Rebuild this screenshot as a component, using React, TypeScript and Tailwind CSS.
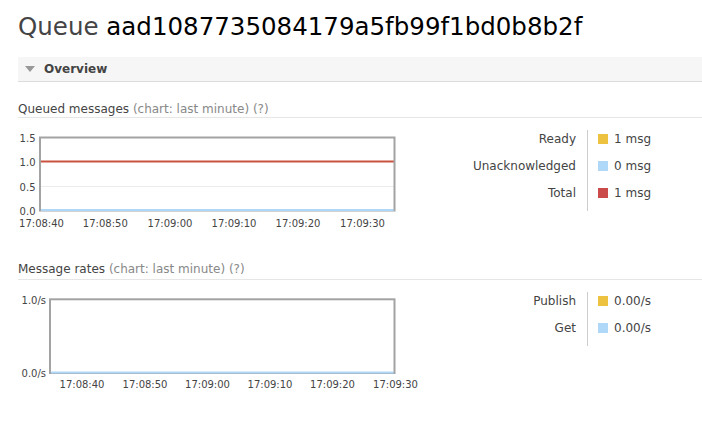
import React from "react";

const FONT = { fontFamily: '"DejaVu Sans", Verdana, sans-serif' };

function Legend({ rows }: { rows: { label: string; color: string; value: string }[] }) {
  return (
    <div className="mt-[12px] flex flex-col">
      {rows.map((r) => (
        <div key={r.label} className="flex h-[27px] text-[12px] leading-[18px] text-[#444]">
          <div className="w-[160px] border-r border-[#ccc] pr-[11px] text-right">{r.label}</div>
          <div className="flex items-start pl-[10px]">
            <span className="mt-[4px] mr-[6px] inline-block h-[10px] w-[10px]" style={{ backgroundColor: r.color }} />
            <span>{r.value}</span>
          </div>
        </div>
      ))}
    </div>
  );
}

function SectionHeader({ title, pb }: { title: string; pb: string }) {
  return (
    <div className={`border-b border-[#e6e6e6] text-[12px] leading-[15px] text-[#444] ${pb}`}>
      {title} <span className="text-[#888]">(chart: last minute) (?)</span>
    </div>
  );
}

const tick = { fontSize: 10, fill: "#444", fontFamily: '"DejaVu Sans", Verdana, sans-serif' };

function Chart1() {
  const xs = [23.5, 87.3, 152, 216, 280, 344.5];
  const labels = ["17:08:40", "17:08:50", "17:09:00", "17:09:10", "17:09:20", "17:09:30"];
  return (
    <svg width={410} height={116} className="block">
      <rect x={22} y={19.5} width={354.5} height={73} fill="#fff" />
      <line x1={22} x2={376.5} y1={68.5} y2={68.5} stroke="#ececec" strokeWidth={1} />
      <line x1={22} x2={376.5} y1={43.5} y2={43.5} stroke="#c9533f" strokeWidth={2} />
      <rect x={22} y={19.5} width={354.5} height={73} fill="none" stroke="#a3a3a3" strokeWidth={2} />
      <line x1={23} x2={375.5} y1={92} y2={92} stroke="#afd8f8" strokeWidth={2} />
      {[
        ["1.5", 23.6],
        ["1.0", 47.6],
        ["0.5", 72.6],
        ["0.0", 96.6],
      ].map(([t, y]) => (
        <text key={t as string} x={17.5} y={y as number} textAnchor="end" style={tick}>
          {t}
        </text>
      ))}
      {xs.map((x, i) => (
        <text key={i} x={x} y={108.5} textAnchor="middle" style={tick}>
          {labels[i]}
        </text>
      ))}
    </svg>
  );
}

function Chart2() {
  const xs = [64, 127, 189.5, 252, 314.5, 377.5];
  const labels = ["17:08:40", "17:08:50", "17:09:00", "17:09:10", "17:09:20", "17:09:30"];
  return (
    <svg width={410} height={110} className="block">
      <rect x={32} y={19.3} width={344.5} height={73.7} fill="none" stroke="#a3a3a3" strokeWidth={2} />
      <line x1={33} x2={375.5} y1={92.5} y2={92.5} stroke="#afd8f8" strokeWidth={2} />
      <text x={28} y={23.6} textAnchor="end" style={tick}>
        1.0/s
      </text>
      <text x={28} y={96.6} textAnchor="end" style={tick}>
        0.0/s
      </text>
      {xs.map((x, i) => (
        <text key={i} x={x} y={107.5} textAnchor="middle" style={tick}>
          {labels[i]}
        </text>
      ))}
    </svg>
  );
}

export default function App() {
  return (
    <div className="min-h-[425px] w-[702px] overflow-hidden bg-white pt-[12px] pl-[18px]" style={FONT}>
      <h1 className="whitespace-nowrap text-[24.5px] font-normal leading-[30px]">
        <span className="text-[#444]">Queue</span> <span className="text-black">aad1087735084179a5fb99f1bd0b8b2f</span>
      </h1>

      <div className="mt-[15px] flex h-[25px] items-center border-b border-[#dcdcdc] bg-[#f6f6f6]">
        <svg width={10} height={6} className="ml-[7px] mr-[9px]" viewBox="0 0 10 6">
          <polygon points="0,0 10,0 5,6" fill="#999" />
        </svg>
        <span className="text-[12px] font-bold text-[#444]">Overview</span>
      </div>

      <div className="mt-[20px]">
        <SectionHeader title="Queued messages" pb="pb-0" />
        <div className="flex">
          <Chart1 />
          <Legend
            rows={[
              { label: "Ready", color: "#edc240", value: "1 msg" },
              { label: "Unacknowledged", color: "#afd8f8", value: "0 msg" },
              { label: "Total", color: "#cb4b4b", value: "1 msg" },
            ]}
          />
        </div>
      </div>

      <div className="mt-[28px]">
        <SectionHeader title="Message rates" pb="pb-[2px]" />
        <div className="flex">
          <Chart2 />
          <Legend
            rows={[
              { label: "Publish", color: "#edc240", value: "0.00/s" },
              { label: "Get", color: "#afd8f8", value: "0.00/s" },
            ]}
          />
        </div>
      </div>
    </div>
  );
}
